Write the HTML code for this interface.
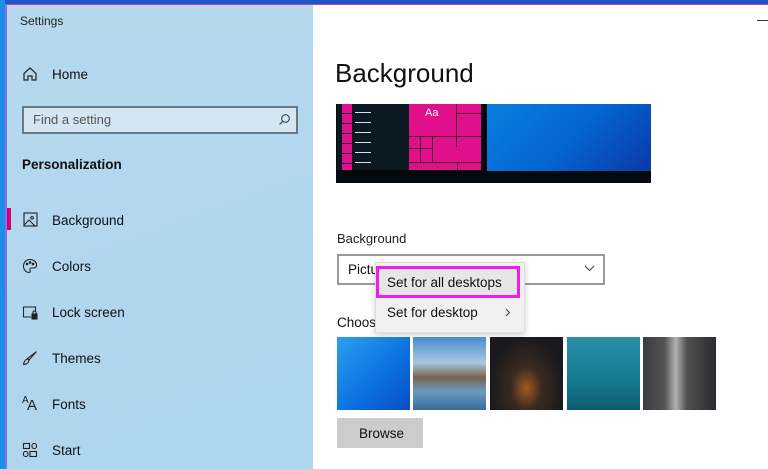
<!DOCTYPE html><html><head><style>
*{margin:0;padding:0;box-sizing:border-box}
body{width:768px;height:469px;overflow:hidden;background:#1e6fd0;font-family:"Liberation Sans",sans-serif;position:relative}
.a{position:absolute}
.side{left:7px;top:5px;width:306px;height:464px;background:linear-gradient(160deg,#b6d8ec 0%,#b2d7ee 40%,#aed6ef 100%)}
.main{left:313px;top:5px;width:455px;height:464px;background:#fff}
.t{font-size:14px;color:#111}
.nav{font-size:13.5px;color:#111;left:52px}
svg{position:absolute}
</style></head><body>
<div class="a" style="left:0;top:0;width:768px;height:4px;background:#1b56c8"></div>
<div class="a" style="left:0;top:4px;width:768px;height:1px;background:#e03c9a"></div>
<div class="a" style="left:0;top:0;width:5px;height:469px;background:#1a8fe8"></div>
<div class="a" style="left:5px;top:4px;width:2px;height:465px;background:#8a6ee0"></div>
<div class="a side"></div>
<div class="a main"></div>
<div class="a" style="left:757px;top:20px;width:11px;height:1px;background:#333"></div>
<div class="a" style="left:20px;top:14px;font-size:12px;color:#222">Settings</div>
<svg style="left:22px;top:66px" width="16" height="16" viewBox="0 0 16 16" fill="none" stroke="#222" stroke-width="1.2"><path d="M2 7.5L8 2l6 5.5V14H10V10H6v4H2z"/></svg>
<div class="a nav" style="top:67px">Home</div>
<div class="a" style="left:22px;top:106px;width:276px;height:28px;border:2px solid #6b7680;background:#d3e6f2"></div>
<div class="a" style="left:33px;top:112px;font-size:13px;color:#555">Find a setting</div>
<svg style="left:278px;top:113px" width="13" height="13" viewBox="0 0 13 13" fill="none" stroke="#444" stroke-width="1.1"><circle cx="7.5" cy="5.5" r="3.8"/><path d="M4.8 8.2L1.5 11.5"/></svg>
<div class="a" style="left:22px;top:157px;font-size:13.5px;font-weight:bold;color:#111">Personalization</div>
<div class="a" style="left:7px;top:208px;width:4px;height:22px;background:#d3007a"></div>
<svg style="left:23px;top:212px" width="15" height="15" viewBox="0 0 15 15" fill="none" stroke="#222" stroke-width="1.1"><rect x="1" y="1" width="13" height="13"/><path d="M1 13l5-5 6 6M9 4.5a1.3 1.3 0 1 0 .1 0"/></svg>
<div class="a nav" style="top:213px">Background</div>
<svg style="left:22px;top:258px" width="16" height="16" viewBox="0 0 16 16" fill="none" stroke="#222" stroke-width="1.1"><path d="M8 1.5C4 1.5 1.5 4.5 1.5 8c0 4 3 6.5 5.5 6.5 1.5 0 1.5-1.5 1-2.5-.5-1 0-2 1.5-2h2c2 0 3-1.5 3-3.5C14.5 4 11.5 1.5 8 1.5z"/><circle cx="5" cy="6" r=".8"/><circle cx="8" cy="4.5" r=".8"/><circle cx="11" cy="6" r=".8"/></svg>
<div class="a nav" style="top:259px">Colors</div>
<svg style="left:22px;top:304px" width="16" height="16" viewBox="0 0 16 16" fill="none" stroke="#222" stroke-width="1.1"><path d="M9 13H1.5V3h12v4"/><rect x="10" y="10" width="5" height="5" fill="#222"/><path d="M11 10V8.5a1.5 1.5 0 0 1 3 0V10"/></svg>
<div class="a nav" style="top:305px">Lock screen</div>
<svg style="left:22px;top:350px" width="16" height="16" viewBox="0 0 16 16" fill="none" stroke="#222" stroke-width="1.1"><path d="M14.5 1.5L7 10l-1.5-1.5zM5.5 9l1.5 1.5C6 14 3 14.5 1.5 14.5 2 13 2 10 5.5 9z"/></svg>
<div class="a nav" style="top:351px">Themes</div>
<div class="a" style="left:22px;top:395px;font-size:10px;color:#222">A</div><div class="a" style="left:27px;top:397px;font-size:15px;color:#222">A</div>
<div class="a nav" style="top:397px">Fonts</div>
<svg style="left:22px;top:442px" width="16" height="16" viewBox="0 0 16 16" fill="none" stroke="#222" stroke-width="1.1"><rect x="1.5" y="1.5" width="6" height="5"/><rect x="10" y="1.5" width="4.5" height="5" rx="2"/><rect x="1.5" y="9.5" width="4.5" height="5" rx="2"/><rect x="8" y="9.5" width="6.5" height="5"/></svg>
<div class="a nav" style="top:443px">Start</div>

<div class="a" style="left:335px;top:58px;font-size:26px;color:#111">Background</div>
<!-- preview -->
<div class="a" style="left:336px;top:104px;width:315px;height:79px;background:#05080c"></div>
<div class="a" style="left:337px;top:104px;width:144px;height:66px;background:#0b1a22"></div>
<div class="a" style="left:342px;top:104px;width:10px;height:66px;background:repeating-linear-gradient(#e0108c 0 9px,#0b1a22 9px 10px)"></div>
<div class="a" style="left:355px;top:108px;width:16px;height:60px;background:repeating-linear-gradient(transparent 0 4px,#dde 4px 5px,transparent 5px 10px)"></div>
<div class="a" style="left:409px;top:104px;width:72px;height:66px;background:#e0108c"></div>
<div class="a" style="left:456px;top:104px;width:1px;height:43px;background:#501030"></div>
<div class="a" style="left:456px;top:113px;width:25px;height:1px;background:#501030"></div>
<div class="a" style="left:409px;top:136px;width:72px;height:1px;background:#501030"></div>
<div class="a" style="left:409px;top:162px;width:72px;height:1px;background:#501030"></div>
<div class="a" style="left:420px;top:136px;width:1px;height:26px;background:#501030"></div>
<div class="a" style="left:432px;top:136px;width:1px;height:26px;background:#501030"></div>
<div class="a" style="left:409px;top:148px;width:23px;height:1px;background:#501030"></div>
<div class="a" style="left:457px;top:162px;width:1px;height:8px;background:#501030"></div>
<div class="a" style="left:425px;top:107px;font-size:11px;color:#fff">Aa</div>
<div class="a" style="left:487px;top:104px;width:164px;height:67px;background:linear-gradient(135deg,#0a7fe0 0%,#0466d2 50%,#0a3aa8 100%)"></div>
<!-- dropdown -->
<div class="a" style="left:337px;top:231px;font-size:13px;color:#222">Background</div>
<div class="a" style="left:337px;top:254px;width:268px;height:31px;border:2px solid #999;background:#fff"></div>
<div class="a" style="left:348px;top:262px;font-size:13.5px;color:#111">Pictu</div>
<svg style="left:584px;top:265px" width="11" height="7" viewBox="0 0 11 7" fill="none" stroke="#444" stroke-width="1.1"><path d="M1 1l4.5 4.5L10 1"/></svg>
<div class="a" style="left:337px;top:315px;font-size:13.5px;color:#111">Choos</div>
<!-- menu -->
<div class="a" style="left:375px;top:262px;width:150px;height:71px;background:#f0f0f0;border:1px solid #ddd;box-shadow:0 2px 6px rgba(0,0,0,.2)"></div>
<div class="a" style="left:376px;top:266px;width:144px;height:32px;border:3px solid #f01ce8;background:#e6e6e6"></div>
<div class="a" style="left:387px;top:275px;font-size:13.5px;color:#111">Set for all desktops</div>
<div class="a" style="left:387px;top:305px;font-size:13.5px;color:#111">Set for desktop</div>
<svg style="left:505px;top:308px" width="6" height="9" viewBox="0 0 6 9" fill="none" stroke="#444"><path d="M1 1l3.5 3.5L1 8"/></svg>
<!-- thumbs -->
<div class="a" style="left:337px;top:337px;width:73px;height:73px;background:linear-gradient(135deg,#2aa0f0,#0a6ee0 60%,#0a4fc0)"></div>
<div class="a" style="left:413px;top:337px;width:73px;height:73px;background:linear-gradient(#4a8ccc 0%,#a8c8e0 35%,#7a6450 55%,#6a9ac0 75%,#3a6a9a)"></div>
<div class="a" style="left:490px;top:337px;width:73px;height:73px;background:radial-gradient(ellipse at 50% 70%,#a05a20 0%,#3a2a20 30%,#1a1a1e 70%)"></div>
<div class="a" style="left:567px;top:337px;width:73px;height:73px;background:linear-gradient(#2a90a8,#147a90 60%,#0e5a70)"></div>
<div class="a" style="left:643px;top:337px;width:73px;height:73px;background:linear-gradient(90deg,#3a3a40 0%,#555 30%,#b0b0b0 45%,#505050 60%,#2a2a30 100%)"></div>
<div class="a" style="left:337px;top:418px;width:86px;height:30px;background:#ccc"></div>
<div class="a" style="left:359px;top:426px;font-size:13.5px;color:#111">Browse</div>
</body></html>
